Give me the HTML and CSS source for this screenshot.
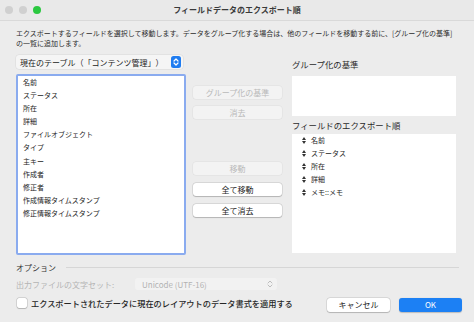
FILE: index.html
```html
<!DOCTYPE html>
<html lang="ja">
<head>
<meta charset="utf-8">
<title>フィールドデータのエクスポート順</title>
<link rel="stylesheet" href="styles.css">
</head>
<body>
<div class="window">
  <header class="titlebar">
    <div class="lights">
      <span class="light gray"></span>
      <span class="light gray"></span>
      <span class="light green"></span>
    </div>
    <div class="title">フィールドデータのエクスポート順</div>
    <div></div>
  </header>
  <div class="content">
    <p class="desc">エクスポートするフィールドを選択して移動します。データをグループ化する場合は、他のフィールドを移動する前に、[グループ化の基準]<br>の一覧に追加します。</p>
    <div class="main">
      <div class="col-left">
        <div class="popup">
          <span class="popup-text">現在のテーブル（「コンテンツ管理」）</span>
          <span class="stepper">
            <svg width="10" height="12" viewBox="0 0 10 12"><rect width="10" height="12" rx="2.5" fill="#1f7cf0"/><path d="M3 5 L5 3 L7 5 M3 7 L5 9 L7 7" fill="none" stroke="#fff" stroke-width="1.2" stroke-linecap="round" stroke-linejoin="round"/></svg>
          </span>
        </div>
        <ul class="list fields">
          <li>名前</li>
          <li>ステータス</li>
          <li>所在</li>
          <li>詳細</li>
          <li>ファイルオブジェクト</li>
          <li>タイプ</li>
          <li>主キー</li>
          <li>作成者</li>
          <li>修正者</li>
          <li>作成情報タイムスタンプ</li>
          <li>修正情報タイムスタンプ</li>
        </ul>
      </div>
      <div class="col-mid">
        <button class="btn disabled">グループ化の基準</button>
        <button class="btn disabled">消去</button>
        <button class="btn disabled move">移動</button>
        <button class="btn">全て移動</button>
        <button class="btn">全て消去</button>
      </div>
      <div class="col-right">
        <div class="label first">グループ化の基準</div>
        <div class="box group"></div>
        <div class="label second">フィールドのエクスポート順</div>
        <ul class="box export">
          <li><svg class="handle" width="4" height="7" viewBox="0 0 4 7"><path d="M2 0 L4 3 L0 3 Z M0 4 L4 4 L2 7 Z" fill="#333"/></svg>名前</li>
          <li><svg class="handle" width="4" height="7" viewBox="0 0 4 7"><path d="M2 0 L4 3 L0 3 Z M0 4 L4 4 L2 7 Z" fill="#333"/></svg>ステータス</li>
          <li><svg class="handle" width="4" height="7" viewBox="0 0 4 7"><path d="M2 0 L4 3 L0 3 Z M0 4 L4 4 L2 7 Z" fill="#333"/></svg>所在</li>
          <li><svg class="handle" width="4" height="7" viewBox="0 0 4 7"><path d="M2 0 L4 3 L0 3 Z M0 4 L4 4 L2 7 Z" fill="#333"/></svg>詳細</li>
          <li><svg class="handle" width="4" height="7" viewBox="0 0 4 7"><path d="M2 0 L4 3 L0 3 Z M0 4 L4 4 L2 7 Z" fill="#333"/></svg>メモ::メモ</li>
        </ul>
      </div>
    </div>
    <section class="options">
      <div class="opt-head"><span>オプション</span><span class="rule"></span></div>
      <div class="opt-charset">
        <span class="charset-label">出力ファイルの文字セット:</span>
        <div class="popup-disabled">
          <span>Unicode (UTF-16)</span>
          <svg width="6" height="10" viewBox="0 0 6 10"><path d="M1 4 L3 2 L5 4 M1 6 L3 8 L5 6" fill="none" stroke="#bdbdbd" stroke-width="1" stroke-linecap="round" stroke-linejoin="round"/></svg>
        </div>
      </div>
      <div class="opt-bottom">
        <label class="check"><span class="checkbox"></span>エクスポートされたデータに現在のレイアウトのデータ書式を適用する</label>
        <div class="actions">
          <button class="btn action">キャンセル</button>
          <button class="btn action primary">OK</button>
        </div>
      </div>
    </section>
  </div>
</div>
</body>
</html>
```

FILE: styles.css
```css
* { box-sizing: border-box; }
html, body { margin: 0; padding: 0; }
body {
  width: 474px;
  height: 322px;
  overflow: hidden;
  background: #ececec;
  font-family: "Noto Sans CJK JP", "Noto Sans", sans-serif;
  color: #242424;
  text-spacing-trim: space-all;
}
.window { width: 474px; height: 322px; background: #ececec; }

.titlebar {
  height: 21px;
  display: grid;
  grid-template-columns: 1fr auto 1fr;
  align-items: center;
  background: #e9e9e9;
  border-bottom: 1px solid #d9d9d9;
}
.lights { display: flex; gap: 6px; padding-left: 5px; }
.light { width: 8px; height: 8px; border-radius: 50%; }
.light.gray { background: #d0d0d0; }
.light.green { background: #2bc840; }
.title { font-size: 8px; font-weight: 700; color: #3a3a3a; line-height: 20px; }

.content { padding: 0 15px 0 16px; }
.desc {
  margin: 7px 0 0;
  font-size: 7px;
  line-height: 10px;
  white-space: nowrap;
  color: #2c2c2c;
}

.main {
  margin-top: 6px;
  display: grid;
  grid-template-columns: 170px 89px 167px;
  column-gap: 7px;
}
.main .col-right { margin-left: 3px; }

.col-left { display: flex; flex-direction: column; }
.popup {
  height: 14px;
  margin-top: 1px;
  width: 167px;
  display: flex;
  align-items: center;
  justify-content: space-between;
  padding: 0 2px 0 4px;
  background: #f5f5f5;
  border-radius: 3px;
  box-shadow: 0 0 0 0.5px rgba(0,0,0,0.08);
  font-size: 8px;
  color: #222;
  white-space: nowrap;
}
.stepper { display: flex; }
.stepper svg { display: block; }

.list {
  margin: 5px 0 0;
  padding: 0 0 0 5px;
  list-style: none;
}
.fields {
  height: 181px;
  background: #fff;
  border: 2px solid #8aabef;
  border-radius: 2px;
  font-size: 7px;
  line-height: 13.1px;
}

.col-mid { display: flex; flex-direction: column; padding-top: 32px; gap: 7px; }
.btn {
  height: 13px;
  border: none;
  border-radius: 3px;
  background: #fff;
  box-shadow: 0 0 0 0.5px rgba(0,0,0,0.14), 0 0.5px 1px rgba(0,0,0,0.18);
  font-family: inherit;
  font-size: 8px;
  line-height: 13px;
  color: #222;
  padding: 0;
  text-align: center;
}
.btn.disabled {
  background: #f3f3f3;
  color: #b9b9b9;
  box-shadow: 0 0 0 0.5px rgba(0,0,0,0.06);
}
.btn.move { margin-top: 36px; }
.col-mid .btn + .btn:not(.disabled) { margin-top: 1px; }

.col-right { display: flex; flex-direction: column; }
.label { font-size: 8.4px; color: #2a2a2a; }
.label.first { height: 20px; line-height: 20px; }
.label.second { height: 18px; line-height: 19px; }
.box { background: #fff; margin: 0; }
.box.group { height: 40px; margin-top: 2px; }
.box.export {
  height: 119px;
  list-style: none;
  padding: 0 0 0 10px;
  font-size: 7px;
  line-height: 13px;
}
.export li { display: flex; align-items: center; gap: 5px; }
.handle { display: block; }

.options { margin-top: 5px; }
.opt-head {
  height: 14px;
  display: flex;
  align-items: center;
  gap: 10px;
  font-size: 8px;
  color: #333;
}
.rule { flex: 1; height: 1px; background: #d6d6d6; }

.opt-charset {
  margin-top: 4px;
  height: 12px;
  display: flex;
  align-items: center;
  font-size: 8px;
}
.charset-label { width: 119px; color: #b4b4b4; }
.popup-disabled {
  width: 142px;
  height: 12px;
  display: flex;
  align-items: center;
  justify-content: space-between;
  padding: 0 4px 0 7px;
  background: #f2f2f2;
  border-radius: 3px;
  color: #b3b3b3;
}
.popup-disabled svg { display: block; }

.opt-bottom {
  margin-top: 7px;
  display: flex;
  justify-content: space-between;
  align-items: flex-start;
}
.check {
  display: flex;
  align-items: center;
  gap: 4px;
  height: 11px;
  font-size: 8.2px;
  font-weight: 500;
  color: #262626;
  white-space: nowrap;
}
.checkbox {
  width: 10px;
  height: 10px;
  margin-left: 1px;
  background: #fff;
  border-radius: 2px;
  box-shadow: 0 0 0 0.5px rgba(0,0,0,0.2), 0 0.5px 1px rgba(0,0,0,0.15);
}
.actions { display: flex; gap: 9px; margin-top: 1px; margin-right: -3px; }
.btn.action { width: 63px; height: 14px; line-height: 14px; }
.btn.primary { background: #1c80f4; color: #fff; box-shadow: 0 0.5px 1px rgba(0,0,0,0.2); }
```
